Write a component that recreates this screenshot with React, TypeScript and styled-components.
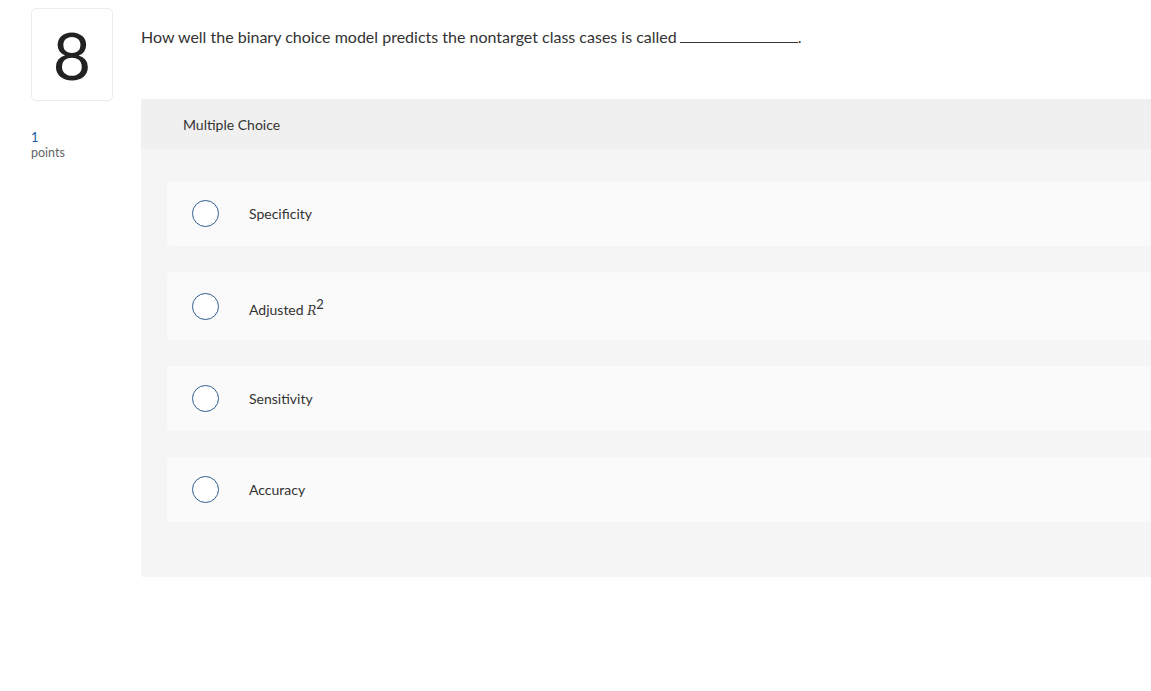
import React from "react";
import styled, { createGlobalStyle } from "styled-components";

const GlobalStyle = createGlobalStyle`
  html, body {
    margin: 0;
    padding: 0;
    background: #fff;
    overflow: hidden;
  }
  body {
    font-family: "Lato", "Liberation Sans", sans-serif;
    color: #333;
  }
`;

const Page = styled.div`
  display: flex;
  padding: 8px 0 0 31px;
`;

const Side = styled.div`
  width: 110px;
  flex-shrink: 0;
  display: flex;
  flex-direction: column;
`;

const NumberBox = styled.div`
  width: 80px;
  height: 91px;
  border: 1px solid #ececec;
  border-radius: 5px;
  display: flex;
  align-items: center;
  justify-content: center;
  font-size: 66px;
  font-weight: 400;
  color: #222;
`;

const Points = styled.div`
  margin-top: 28px;
  display: flex;
  flex-direction: column;
  font-size: 12.5px;
  line-height: 16px;

  strong {
    font-weight: 400;
    color: #1b5aa2;
    font-size: 13px;
  }

  span {
    color: #666;
  }
`;

const Main = styled.div`
  flex: 1;
  min-width: 0;
  display: flex;
  flex-direction: column;
`;

const Question = styled.p`
  margin: 19px 0 0;
  font-size: 16px;
  line-height: 20px;
  color: #333;
  height: 72px;

  .blank {
    display: inline-block;
    width: 118px;
    border-bottom: 1px solid #333;
    margin-left: 3px;
    vertical-align: baseline;
    height: 14px;
  }
`;

const Panel = styled.div`
  background: #f5f5f5;
  border-radius: 3px 0 0 3px;
  padding-bottom: 55px;
`;

const PanelHeader = styled.div`
  height: 50px;
  background: #f0f0f0;
  display: flex;
  align-items: center;
  padding-left: 42px;
  font-size: 14px;
  color: #333;
`;

const Options = styled.div`
  display: flex;
  flex-direction: column;
  gap: 26px;
  padding: 32px 0 0 26px;
`;

const Option = styled.label<{ $tall?: boolean }>`
  min-height: ${(p) => (p.$tall ? 68 : 65)}px;
  background: #fafafa;
  border-radius: 3px 0 0 3px;
  display: flex;
  align-items: center;
  gap: 30px;
  padding-left: 25px;
  font-size: 14px;
  color: #333;
  cursor: pointer;
`;

const Radio = styled.span`
  width: 25px;
  height: 25px;
  border: 1.5px solid #2d5c8e;
  border-radius: 50%;
  background: #fff;
  flex-shrink: 0;
`;

const OptionText = styled.span<{ $drop?: boolean }>`
  margin-top: ${(p) => (p.$drop ? 6 : 0)}px;

  i {
    font-family: "DejaVu Serif", serif;
    font-size: 12px;
  }

  sup {
    font-size: 13px;
    line-height: 0;
  }
`;

const choices: { key: string; label: React.ReactNode; tall?: boolean }[] = [
  { key: "spec", label: "Specificity" },
  {
    key: "adj",
    label: (
      <>
        Adjusted <i>R</i>
        <sup>2</sup>
      </>
    ),
    tall: true,
  },
  { key: "sens", label: "Sensitivity" },
  { key: "acc", label: "Accuracy" },
];

const App = () => {
  return (
    <>
      <GlobalStyle />
      <Page>
        <Side>
          <NumberBox>8</NumberBox>
          <Points>
            <strong>1</strong>
            <span>points</span>
          </Points>
        </Side>
        <Main>
          <Question>
            How well the binary choice model predicts the nontarget class cases is called
            <span className="blank" />.
          </Question>
          <Panel>
            <PanelHeader>Multiple Choice</PanelHeader>
            <Options>
              {choices.map((c) => (
                <Option key={c.key} $tall={c.tall}>
                  <Radio />
                  <OptionText $drop={c.tall}>{c.label}</OptionText>
                </Option>
              ))}
            </Options>
          </Panel>
        </Main>
      </Page>
    </>
  );
};

export default App;
